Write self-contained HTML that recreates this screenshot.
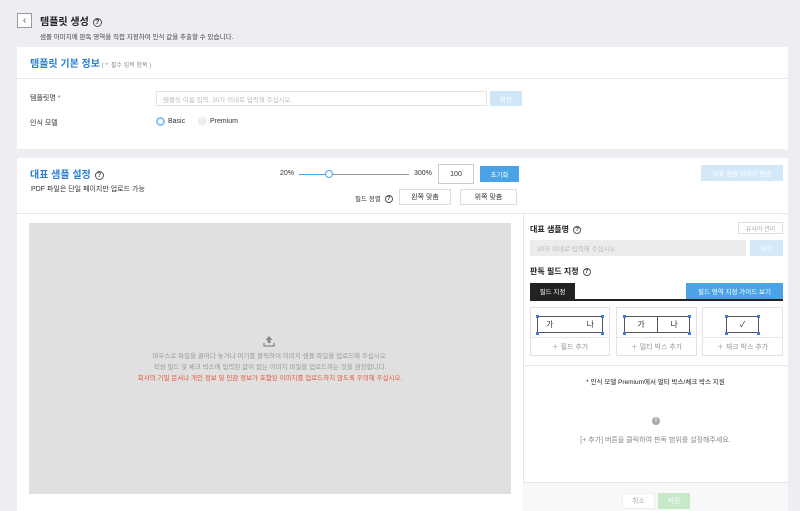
<!DOCTYPE html>
<html><head><meta charset="utf-8"><style>
*{margin:0;padding:0;box-sizing:border-box}
body{width:800px;height:511px;overflow:hidden;background:#eceef2;font-family:"Liberation Sans","Noto Sans CJK KR",sans-serif;position:relative;color:#333}
.a{position:absolute;white-space:nowrap}
.c{display:flex;align-items:center;justify-content:center}
.q{display:inline-block;width:9px;height:9px;border:1px solid #555;border-radius:50%;font-size:7px;line-height:7px;text-align:center;vertical-align:middle;margin-left:4px;font-weight:bold}
.card{position:absolute;background:#fff}
.btn{position:absolute;border:1px solid #ddd;background:#fff;font-size:7px;color:#333;display:flex;align-items:center;justify-content:center}
.fc{position:absolute;border:1px solid #e2e2e2;background:#fff}
.fc .top{position:absolute;left:0;right:0;top:0;height:30px;border-bottom:1px solid #e6e6e6}
.fc .bot{position:absolute;left:0;right:0;top:31px;font-size:7px;color:#999;text-align:center;line-height:17px}
.bx{position:absolute;top:8px;height:17px;border:1px solid #555;font-size:8px;line-height:15px}
.d{position:absolute;width:3px;height:3px;background:#3a7ee0}
</style></head><body>
<div class="a c" style="left:17px;top:13px;width:15px;height:15px;border:1px solid #999;background:#fff;font-size:10px;color:#555">‹</div>
<div class="a" style="left:40px;top:13px;font-size:10px;font-weight:bold;color:#222">템플릿 생성<span class="q">?</span></div>
<div class="a" style="left:40px;top:31px;font-size:6.5px;color:#444">샘플 이미지에 판독 영역을 직접 지정하여 인식 값을 추출할 수 있습니다.</div>

<div class="card" style="left:17px;top:47px;width:771px;height:102px"></div>
<div class="a" style="left:30px;top:55px;font-size:10px;color:#2b7fd3;font-weight:bold">템플릿 기본 정보<span style="font-size:6px;color:#888;font-weight:normal"> ( *: 필수 입력 항목 )</span></div>
<div class="a" style="left:17px;top:78px;width:771px;height:1px;background:#e6e6e6"></div>
<div class="a" style="left:30px;top:93px;font-size:7px">템플릿명 <span style="color:#2b7fd3">*</span></div>
<div class="a" style="left:156px;top:91px;width:331px;height:15px;border:1px solid #e2e2e2;font-size:6.5px;color:#bbb;padding-left:6px;display:flex;align-items:center">템플릿 이름 입력. 30자 이내로 입력해 주십시오.</div>
<div class="a c" style="left:490px;top:91px;width:32px;height:15px;background:#cfe5f8;color:#fff;font-size:6.5px">확인</div>
<div class="a" style="left:30px;top:118px;font-size:7px">인식 모델</div>
<div class="a" style="left:156px;top:117px;width:9px;height:9px;border-radius:50%;border:2px solid #8cc2ef;background:#fff"></div>
<div class="a" style="left:168px;top:118px;font-size:7px">Basic</div>
<div class="a" style="left:198px;top:117px;width:9px;height:9px;border-radius:50%;background:#eee"></div>
<div class="a" style="left:210px;top:118px;font-size:7px">Premium</div>

<div class="card" style="left:17px;top:158px;width:771px;height:353px"></div>
<div class="a" style="left:30px;top:166px;font-size:10px;color:#2b7fd3;font-weight:bold">대표 샘플 설정<span class="q" style="color:#555;border-color:#555">?</span></div>
<div class="a" style="left:31px;top:184px;font-size:7px">PDF 파일은 단일 페이지만 업로드 가능</div>
<div class="a" style="left:280px;top:170px;font-size:7px">20%</div>
<div class="a" style="left:299px;top:174px;width:30px;height:1px;background:#4aa3e6"></div>
<div class="a" style="left:329px;top:174px;width:80px;height:1px;background:#999"></div>
<div class="a" style="left:325px;top:170px;width:8px;height:8px;border-radius:50%;border:1.5px solid #4aa3e6;background:#fff"></div>
<div class="a" style="left:414px;top:170px;font-size:7px">300%</div>
<div class="a c" style="left:438px;top:164px;width:36px;height:20px;border:1px solid #ccc;font-size:7px">100</div>
<div class="a c" style="left:480px;top:166px;width:39px;height:16px;background:#4aa3e6;color:#fff;font-size:6.5px">초기화</div>
<div class="a c" style="left:701px;top:165px;width:82px;height:16px;background:#d3e8f9;color:#fff;font-size:6.5px">대표 샘플 이미지 변경</div>
<div class="a" style="left:355px;top:193px;font-size:6.5px">필드 정렬<span class="q" style="width:8px;height:8px;font-size:6px;line-height:6px">?</span></div>
<div class="btn" style="left:399px;top:189px;width:52px;height:16px">왼쪽 맞춤</div>
<div class="btn" style="left:460px;top:189px;width:57px;height:16px">위쪽 맞춤</div>
<div class="a" style="left:17px;top:213px;width:771px;height:1px;background:#e6e6e6"></div>

<div class="a" style="left:29px;top:223px;width:482px;height:271px;background:#e0e0e0"></div>
<svg class="a" style="left:263px;top:335px" width="12" height="12" viewBox="0 0 12 12"><path d="M6 1 L2.5 5 H4.5 V8 H7.5 V5 H9.5 Z" fill="#888"/><path d="M1 8 V11 H11 V8" fill="none" stroke="#888" stroke-width="1.3"/></svg>
<div class="a" style="left:29px;top:351px;width:482px;text-align:center;font-size:6.5px;color:#999;line-height:11px">마우스로 파일을 끌어다 놓거나 여기를 클릭하여 이미지 샘플 파일을 업로드해 주십시오.<br>작성 필드 및 체크 박스에 입력된 값이 없는 이미지 파일을 업로드하는 것을 권장합니다.<br><span style="color:#e8553c">회사의 기밀 문서나 개인 정보 및 민감 정보가 포함된 이미지를 업로드하지 않도록 주의해 주십시오.</span></div>

<div class="a" style="left:523px;top:213px;width:1px;height:298px;background:#e6e6e6"></div>
<div class="a" style="left:530px;top:224px;font-size:8px;font-weight:bold;color:#222">대표 샘플명<span class="q" style="width:8px;height:8px;font-size:6px;line-height:6px">?</span></div>
<div class="btn" style="left:738px;top:222px;width:45px;height:12px;color:#aaa;font-size:6px">유사어 관리</div>
<div class="a" style="left:530px;top:240px;width:216px;height:16px;background:#ececec;font-size:6.5px;color:#bbb;padding-left:7px;display:flex;align-items:center">30자 이내로 입력해 주십시오.</div>
<div class="a c" style="left:750px;top:240px;width:33px;height:16px;background:#d3e8f9;color:#fff;font-size:6.5px">확인</div>
<div class="a" style="left:530px;top:266px;font-size:8px;font-weight:bold;color:#222">판독 필드 지정<span class="q" style="width:8px;height:8px;font-size:6px;line-height:6px">?</span></div>
<div class="a c" style="left:530px;top:283px;width:45px;height:16px;background:#222;color:#fff;font-size:6.5px">필드 지정</div>
<div class="a c" style="left:686px;top:283px;width:97px;height:16px;background:#4aa3e6;color:#fff;font-size:6.5px">필드 영역 지정 가이드 보기</div>
<div class="a" style="left:530px;top:299px;width:253px;height:1.5px;background:#222"></div>

<div class="fc" style="left:530px;top:307px;width:80px;height:49px"><div class="top"><div class="bx" style="left:6px;width:66px;padding:0 8px">가<span style="float:right">나</span></div><div class="d" style="left:5px;top:7px"></div><div class="d" style="left:70px;top:7px"></div><div class="d" style="left:5px;top:24px"></div><div class="d" style="left:70px;top:24px"></div></div><div class="bot">＋ 필드 추가</div></div>
<div class="fc" style="left:616px;top:307px;width:81px;height:49px"><div class="top"><div class="bx" style="left:7px;width:66px"><span style="position:absolute;left:0;width:33px;text-align:center;border-right:1px solid #555">가</span><span style="position:absolute;left:33px;width:32px;text-align:center">나</span></div><div class="d" style="left:6px;top:7px"></div><div class="d" style="left:71px;top:7px"></div><div class="d" style="left:6px;top:24px"></div><div class="d" style="left:71px;top:24px"></div></div><div class="bot">＋ 멀티 박스 추가</div></div>
<div class="fc" style="left:702px;top:307px;width:81px;height:49px"><div class="top"><div class="bx" style="left:23px;width:33px;text-align:center">✓</div><div class="d" style="left:22px;top:7px"></div><div class="d" style="left:54px;top:7px"></div><div class="d" style="left:22px;top:24px"></div><div class="d" style="left:54px;top:24px"></div></div><div class="bot">＋ 체크 박스 추가</div></div>

<div class="a" style="left:523px;top:365px;width:265px;height:1px;background:#e6e6e6"></div>
<div class="a" style="left:523px;top:376px;width:265px;text-align:center;font-size:6.5px;color:#222">* 인식 모델 Premium에서 멀티 박스/체크 박스 지원</div>
<div class="a c" style="left:652px;top:417px;width:8px;height:8px;border-radius:50%;background:#aaa;color:#fff;font-size:6px;font-weight:bold">!</div>
<div class="a" style="left:523px;top:435px;width:265px;text-align:center;font-size:7px;color:#888">[+ 추가] 버튼을 클릭하여 판독 범위를 설정해주세요.</div>
<div class="a" style="left:523px;top:482px;width:265px;height:29px;background:#f8f8f8;border-top:1px solid #e6e6e6"></div>
<div class="btn" style="left:622px;top:493px;width:33px;height:16px;color:#aaa;border-color:#eee">취소</div>
<div class="a c" style="left:658px;top:493px;width:32px;height:16px;background:#c6e9c8;color:#fff;font-size:7px">저장</div>
</body></html>
